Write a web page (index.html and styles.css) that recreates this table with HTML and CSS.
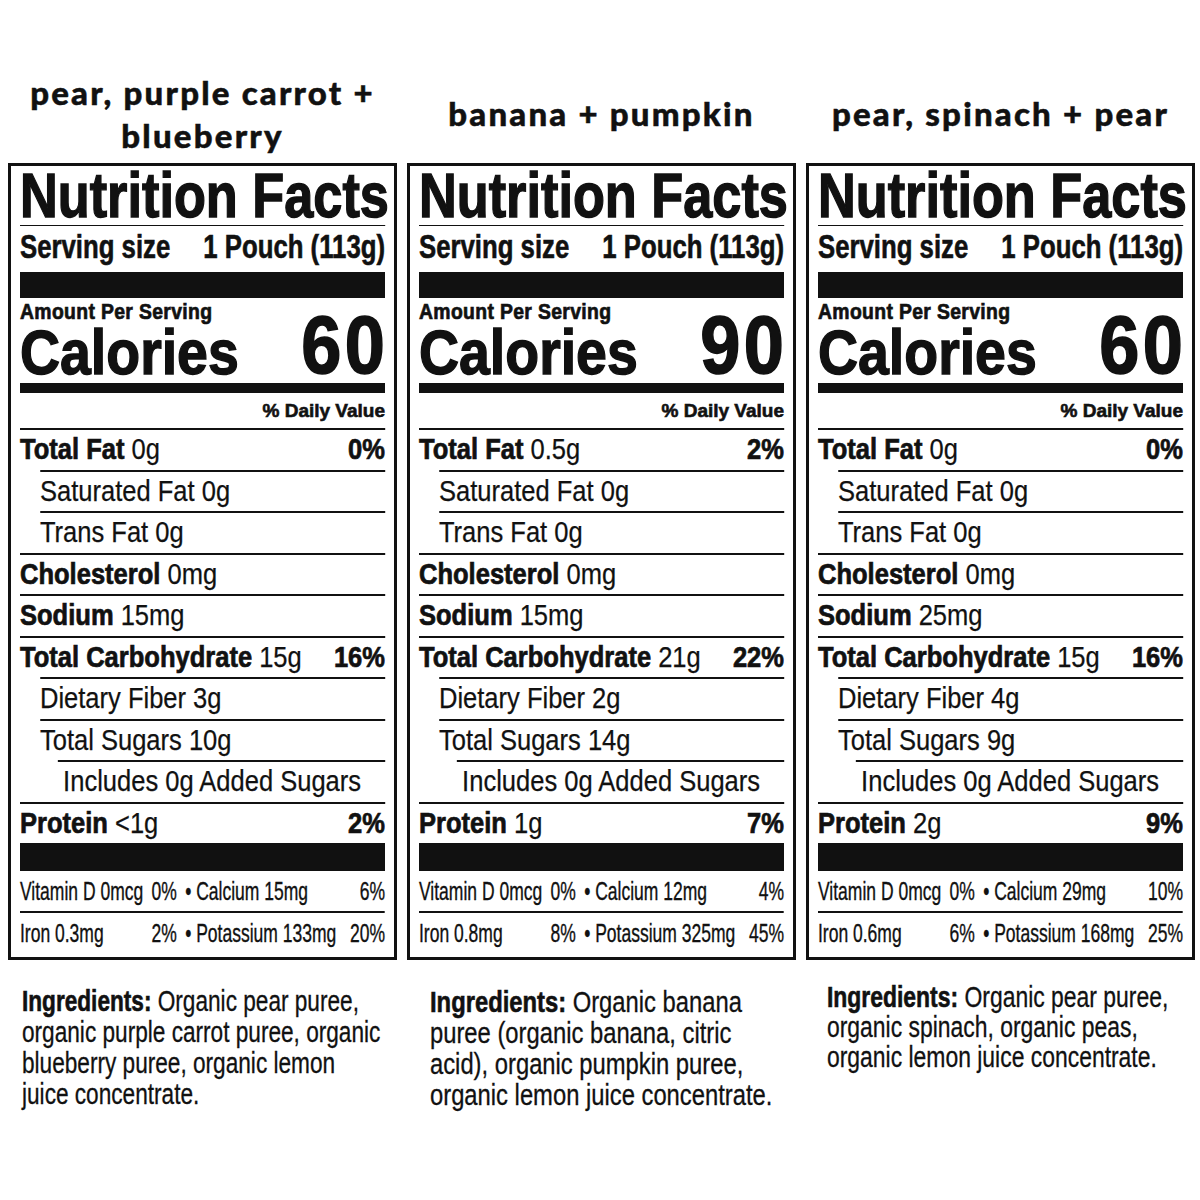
FILE: index.html
```html
<!DOCTYPE html>
<html>
<head>
<meta charset="utf-8">
<link rel="stylesheet" href="styles.css">
</head>
<body>
<div class="page">
  <section class="col col1">
    <h2 class="flavor">pear, purple carrot +<br>blueberry</h2>
    <div class="panel">
      <div class="title sx">Nutrition Facts</div>
      <div class="serving sx"><span>Serving size</span><span>1 Pouch (113g)</span></div>
      <div class="bar thick"></div>
      <div class="cal sx">
        <div class="cal-left"><div class="aps">Amount Per Serving</div><div class="cal-word">Calories</div></div>
        <div class="cal-num">60</div>
      </div>
      <div class="bar mid"></div>
      <div class="dv">% Daily Value</div>
      <div class="rows sx">
        <div class="row"><span><b>Total Fat</b> 0g</span><b>0%</b></div>
        <div class="row ind"><span>Saturated Fat 0g</span></div>
        <div class="row ind"><span>Trans Fat 0g</span></div>
        <div class="row"><span><b>Cholesterol</b> 0mg</span></div>
        <div class="row"><span><b>Sodium</b> 15mg</span></div>
        <div class="row"><span><b>Total Carbohydrate</b> 15g</span><b>16%</b></div>
        <div class="row ind"><span>Dietary Fiber 3g</span></div>
        <div class="row ind"><span>Total Sugars 10g</span></div>
        <div class="row ind2"><span>Includes 0g Added Sugars</span></div>
        <div class="row"><span><b>Protein</b> &lt;1g</span><b>2%</b></div>
      </div>
      <div class="bar thick2"></div>
      <div class="vits sx">
        <div class="vit"><div class="half"><span>Vitamin D 0mcg</span><span>0%</span></div><div class="half"><span>• Calcium 15mg</span><span>6%</span></div></div>
        <div class="vit line"><div class="half"><span>Iron 0.3mg</span><span>2%</span></div><div class="half"><span>• Potassium 133mg</span><span>20%</span></div></div>
      </div>
    </div>
    <p class="ingr sx"><b>Ingredients:</b> Organic pear puree,<br>organic purple carrot puree, organic<br>blueberry puree, organic lemon<br>juice concentrate.</p>
  </section>

  <section class="col col2">
    <h2 class="flavor">banana + pumpkin</h2>
    <div class="panel">
      <div class="title sx">Nutrition Facts</div>
      <div class="serving sx"><span>Serving size</span><span>1 Pouch (113g)</span></div>
      <div class="bar thick"></div>
      <div class="cal sx">
        <div class="cal-left"><div class="aps">Amount Per Serving</div><div class="cal-word">Calories</div></div>
        <div class="cal-num">90</div>
      </div>
      <div class="bar mid"></div>
      <div class="dv">% Daily Value</div>
      <div class="rows sx">
        <div class="row"><span><b>Total Fat</b> 0.5g</span><b>2%</b></div>
        <div class="row ind"><span>Saturated Fat 0g</span></div>
        <div class="row ind"><span>Trans Fat 0g</span></div>
        <div class="row"><span><b>Cholesterol</b> 0mg</span></div>
        <div class="row"><span><b>Sodium</b> 15mg</span></div>
        <div class="row"><span><b>Total Carbohydrate</b> 21g</span><b>22%</b></div>
        <div class="row ind"><span>Dietary Fiber 2g</span></div>
        <div class="row ind"><span>Total Sugars 14g</span></div>
        <div class="row ind2"><span>Includes 0g Added Sugars</span></div>
        <div class="row"><span><b>Protein</b> 1g</span><b>7%</b></div>
      </div>
      <div class="bar thick2"></div>
      <div class="vits sx">
        <div class="vit"><div class="half"><span>Vitamin D 0mcg</span><span>0%</span></div><div class="half"><span>• Calcium 12mg</span><span>4%</span></div></div>
        <div class="vit line"><div class="half"><span>Iron 0.8mg</span><span>8%</span></div><div class="half"><span>• Potassium 325mg</span><span>45%</span></div></div>
      </div>
    </div>
    <p class="ingr sx"><b>Ingredients:</b> Organic banana<br>puree (organic banana, citric<br>acid), organic pumpkin puree,<br>organic lemon juice concentrate.</p>
  </section>

  <section class="col col3">
    <h2 class="flavor">pear, spinach + pear</h2>
    <div class="panel">
      <div class="title sx">Nutrition Facts</div>
      <div class="serving sx"><span>Serving size</span><span>1 Pouch (113g)</span></div>
      <div class="bar thick"></div>
      <div class="cal sx">
        <div class="cal-left"><div class="aps">Amount Per Serving</div><div class="cal-word">Calories</div></div>
        <div class="cal-num">60</div>
      </div>
      <div class="bar mid"></div>
      <div class="dv">% Daily Value</div>
      <div class="rows sx">
        <div class="row"><span><b>Total Fat</b> 0g</span><b>0%</b></div>
        <div class="row ind"><span>Saturated Fat 0g</span></div>
        <div class="row ind"><span>Trans Fat 0g</span></div>
        <div class="row"><span><b>Cholesterol</b> 0mg</span></div>
        <div class="row"><span><b>Sodium</b> 25mg</span></div>
        <div class="row"><span><b>Total Carbohydrate</b> 15g</span><b>16%</b></div>
        <div class="row ind"><span>Dietary Fiber 4g</span></div>
        <div class="row ind"><span>Total Sugars 9g</span></div>
        <div class="row ind2"><span>Includes 0g Added Sugars</span></div>
        <div class="row"><span><b>Protein</b> 2g</span><b>9%</b></div>
      </div>
      <div class="bar thick2"></div>
      <div class="vits sx">
        <div class="vit"><div class="half"><span>Vitamin D 0mcg</span><span>0%</span></div><div class="half"><span>• Calcium 29mg</span><span>10%</span></div></div>
        <div class="vit line"><div class="half"><span>Iron 0.6mg</span><span>6%</span></div><div class="half"><span>• Potassium 168mg</span><span>25%</span></div></div>
      </div>
    </div>
    <p class="ingr sx"><b>Ingredients:</b> Organic pear puree,<br>organic spinach, organic peas,<br>organic lemon juice concentrate.</p>
  </section>
</div>
</body>
</html>
```

FILE: styles.css
```css
* { box-sizing: border-box; }
body {
  margin: 0;
  background: #fff;
  color: #111;
  width: 1200px;
  height: 1200px;
  overflow: hidden;
}
.page {
  display: grid;
  grid-template-columns: 389px 389px 389px;
  column-gap: 10px;
  padding-left: 8px;
}
.col { display: flex; flex-direction: column; }
.flavor {
  margin: 0;
  height: 163px;
  padding-top: 64px;
  display: flex;
  align-items: center;
  justify-content: center;
  text-align: center;
  font-family: "Lato", "DejaVu Sans", sans-serif;
  font-weight: 900;
  font-size: 33px;
  letter-spacing: 2.2px;
  line-height: 43px;
  color: #111;
  white-space: nowrap;
  -webkit-text-stroke: 0.5px #111;
}

/* horizontal condensing of the label typography */
.sx {
  transform-origin: 0 0;
  transform: scaleX(var(--s));
  width: calc(365px / var(--s));
}

.panel {
  border: 3px solid #111;
  height: 797px;
  padding: 0 9px;
  font-family: "Liberation Sans", Arial, sans-serif;
  overflow: visible;
}
.title {
  --s: 0.83;
  font-weight: 700;
  font-size: 63px;
  line-height: 59px;
  height: 60px;
  white-space: nowrap;
  border-bottom: 1px solid #111;
  -webkit-text-stroke: 1.4px #111;
}
.serving {
  --s: 0.78;
  display: flex;
  justify-content: space-between;
  font-weight: 700;
  font-size: 33px;
  line-height: 42px;
  height: 46px;
  white-space: nowrap;
  -webkit-text-stroke: 0.6px #111;
}
.bar { background: #111; }
.bar.thick { height: 26px; }
.bar.mid { height: 10px; }
.bar.thick2 { height: 28px; }
.cal {
  --s: 0.88;
  display: flex;
  justify-content: space-between;
  align-items: flex-end;
  height: 85px;
  padding-bottom: 3px;
  white-space: nowrap;
}
.aps {
  font-weight: 700;
  font-size: 22px;
  line-height: 24px;
  padding-top: 3px;
  letter-spacing: 0.4px;
  -webkit-text-stroke: 0.7px #111;
}
.cal-word {
  font-weight: 700;
  font-size: 63px;
  line-height: 56px;
  -webkit-text-stroke: 1.4px #111;
}
.cal-num {
  font-weight: 700;
  font-size: 82px;
  line-height: 70px;
  letter-spacing: 4px;
  margin-right: -4px;
  -webkit-text-stroke: 1.6px #111;
}
.dv {
  text-align: right;
  font-weight: 700;
  font-size: 19px;
  line-height: 35px;
  height: 35px;
  -webkit-text-stroke: 0.6px #111;
}
.rows { --s: 0.88; }
.row {
  display: flex;
  justify-content: space-between;
  align-items: center;
  height: 41.5px;
  border-top: 2px solid #111;
  font-size: 29px;
  white-space: nowrap;
  -webkit-text-stroke: 0.25px #111;
}
.row b { font-weight: 700; -webkit-text-stroke: 0.7px #111; }
.row.ind { margin-left: 22.7px; }
.row.ind2 { margin-left: 43px; padding-left: 6px; }
.vits { --s: 0.70; }
.vit {
  display: grid;
  grid-template-columns: 224px 1fr;
  column-gap: 12px;
  height: 40px;
  align-items: center;
  font-size: 25px;
  white-space: nowrap;
  -webkit-text-stroke: 0.35px #111;
}
.vit.line { border-top: 2px solid #111; height: 43px; }
.half { display: flex; justify-content: space-between; }
.ingr {
  --s: 0.78;
  width: 500px;
  margin: 26px 0 0 14px;
  font-family: "Liberation Sans", Arial, sans-serif;
  font-size: 29px;
  line-height: 31px;
  white-space: nowrap;
  -webkit-text-stroke: 0.3px #111;
}
.ingr b { -webkit-text-stroke: 0.6px #111; }
.col2 .ingr { --s: 0.82; width: 460px; margin-left: 23px; margin-top: 27px; }
.col3 .ingr { --s: 0.79; width: 460px; margin-left: 21px; margin-top: 22px; line-height: 30px; }
```
